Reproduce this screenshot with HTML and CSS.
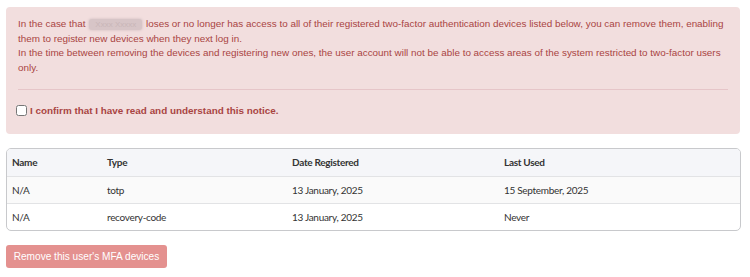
FILE: index.html
```html
<!DOCTYPE html>
<html>
<head>
<meta charset="utf-8">
<link rel="stylesheet" href="styles.css">
</head>
<body>
<div class="page">
  <div class="alert">
    <p class="notice">In the case that <span class="blur">Xxxx Xxxxx</span> loses or no longer has access to all of their registered two-factor authentication devices listed below, you can remove them, enabling<br>them to register new devices when they next log in.<br>In the time between removing the devices and registering new ones, the user account will not be able to access areas of the system restricted to two-factor users<br>only.</p>
    <hr class="sep">
    <label class="confirm"><input type="checkbox" class="check"> I confirm that I have read and understand this notice.</label>
  </div>
  <div class="table-wrap">
    <table class="devices">
      <thead>
        <tr><th class="c-name">Name</th><th class="c-type">Type</th><th class="c-date">Date Registered</th><th>Last Used</th></tr>
      </thead>
      <tbody>
        <tr class="odd"><td>N/A</td><td>totp</td><td>13 January, 2025</td><td>15 September, 2025</td></tr>
        <tr><td>N/A</td><td>recovery-code</td><td>13 January, 2025</td><td>Never</td></tr>
      </tbody>
    </table>
  </div>
  <button class="btn-remove" disabled>Remove this user's MFA devices</button>
</div>
</body>
</html>
```
FILE: styles.css
```css
html, body { margin: 0; padding: 0; background: #fff; }
.page {
  padding: 7px 9px 0 6px;
  display: flex;
  flex-direction: column;
  align-items: flex-start;
  font-family: "Liberation Sans", Arial, sans-serif;
}
.alert {
  box-sizing: border-box;
  width: 734px;
  height: 127px;
  background: #f2dede;
  border-radius: 4px;
  color: #a94442;
  padding: 10px 2px 0 12px;
  font-size: 9.9px;
}
.notice {
  margin: 0;
  line-height: 14.6px;
  white-space: nowrap;
}
.blur {
  display: inline-block;
  width: 53px;
  height: 11px;
  margin: 2px 1px 0 1px;
  line-height: 11px;
  font-size: 8px;
  white-space: nowrap;
  overflow: hidden;
  text-align: center;
  vertical-align: top;
  color: #c9b6b8;
  background: #d7c5c7;
  border-radius: 3px;
  box-shadow: 0 0 2px 1px #e0cdcf;
}
.sep {
  border: 0;
  border-top: 1px solid #e6c5c8;
  margin: 14px 10px 0 0;
}
.confirm {
  display: flex;
  align-items: center;
  gap: 3px;
  margin-top: 15px;
  margin-left: -2px;
  font-weight: bold;
  font-size: 9.9px;
}
.check {
  margin: 0;
  width: 11px;
  height: 11px;
}
.table-wrap {
  box-sizing: border-box;
  width: 735px;
  margin-top: 14px;
  border: 1px solid #c8c9cc;
  border-radius: 5px;
  overflow: hidden;
}
.devices {
  width: 100%;
  border-collapse: collapse;
  font-family: "Lato", sans-serif;
  font-size: 10px;
  letter-spacing: -0.3px;
  color: #333;
}
.devices th, .devices td {
  text-align: left;
  height: 27px;
  padding: 0 0 0 5px;
  box-sizing: border-box;
}
.devices th { font-weight: bold; background: #f5f6f9; }
.devices td { border-top: 1px solid #e2e3e5; }
.devices tr.odd td { background: #fafafa; }
.c-name { width: 95px; }
.c-type { width: 185px; }
.c-date { width: 212px; }
.btn-remove {
  margin-top: 14px;
  width: 161px;
  height: 23px;
  background: #e4918f;
  border: 0;
  border-radius: 3px;
  color: #fff;
  font-family: "Liberation Sans", Arial, sans-serif;
  font-size: 10.1px;
  padding: 0;
}
```
